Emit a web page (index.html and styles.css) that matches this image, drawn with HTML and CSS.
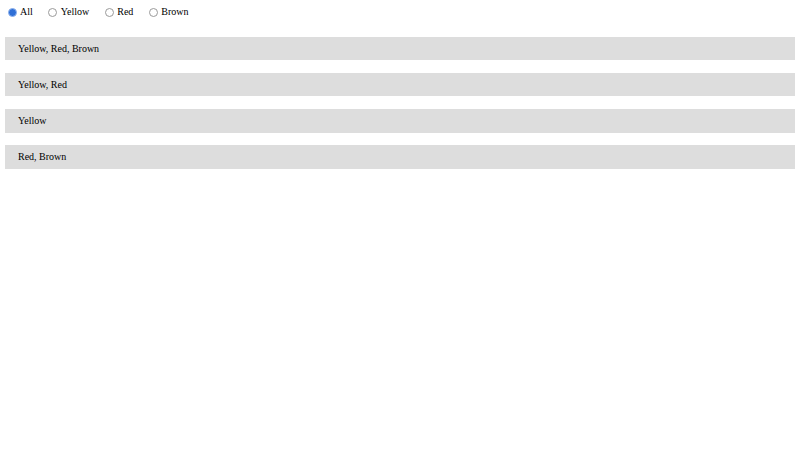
FILE: index.html
```html
<!DOCTYPE html>
<html>
<head>
<meta charset="utf-8">
<link rel="stylesheet" href="styles.css">
</head>
<body>
<div class="filters">
  <label class="opt"><input type="radio" name="c" checked> All</label>
  <label class="opt"><input type="radio" name="c"> Yellow</label>
  <label class="opt"><input type="radio" name="c"> Red</label>
  <label class="opt"><input type="radio" name="c"> Brown</label>
</div>
<div class="list">
  <div class="item">Yellow, Red, Brown</div>
  <div class="item">Yellow, Red</div>
  <div class="item">Yellow</div>
  <div class="item">Red, Brown</div>
</div>
</body>
</html>
```
FILE: styles.css
```css
html, body {
  margin: 0;
  padding: 0;
  background: #fff;
}
body {
  font-family: "Liberation Serif", "Times New Roman", serif;
  font-size: 10px;
  color: #000;
}
.filters {
  display: flex;
  align-items: center;
  padding: 6px 0 0 7.5px;
  height: 12px;
}
.opt {
  display: flex;
  align-items: center;
  margin-right: 15.5px;
  line-height: 12px;
}
.opt input {
  appearance: none;
  -webkit-appearance: none;
  box-sizing: border-box;
  width: 9px;
  height: 9px;
  margin: 0 3.5px 0 0;
  border: 1px solid #9a9a9a;
  border-radius: 50%;
  background: #fff;
}
.opt input:checked {
  border-color: #8fb3ee;
  background: #2f6fd6;
}
.list {
  display: flex;
  flex-direction: column;
  gap: 12.9px;
  padding: 18.6px 5px 0 5px;
}
.item {
  background: #ddd;
  height: 23.4px;
  line-height: 23.4px;
  padding-left: 13px;
}
```
